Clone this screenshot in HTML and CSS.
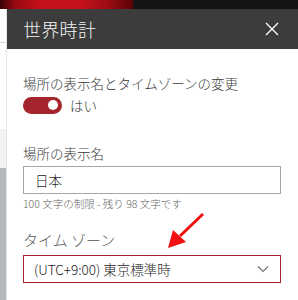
FILE: index.html
```html
<!DOCTYPE html>
<html lang="ja">
<head>
<meta charset="utf-8">
<link rel="stylesheet" href="styles.css">
</head>
<body>
<div class="topbar">
  <div class="banner"></div>
  <div class="dark"><span class="sun"></span></div>
</div>
<div class="main">
  <div class="side">
    <div class="s1"></div>
    <div class="s2"></div>
    <div class="s3"></div>
    <div class="s4"></div>
  </div>
  <div class="panel">
    <div class="header">
      <span class="title">世界時計</span>
      <svg class="close" width="14" height="14" viewBox="0 0 14 14"><path d="M1 1L13 13M13 1L1 13" stroke="#fff" stroke-width="1.3" fill="none"/></svg>
    </div>
    <div class="body">
      <div class="label">場所の表示名とタイムゾーンの変更</div>
      <div class="toggle-row">
        <span class="toggle"><span class="thumb"></span></span>
        <span class="toggle-text">はい</span>
      </div>
      <div class="label label2">場所の表示名</div>
      <div class="input">日本</div>
      <div class="help">100 文字の制限 - 残り 98 文字です</div>
      <div class="label label3">タイム ゾーン</div>
      <div class="select">
        <span>(UTC+9:00) 東京標準時</span>
        <svg class="chev" width="12" height="8" viewBox="0 0 12 8"><path d="M1 1.5L6 6.5L11 1.5" stroke="#777" stroke-width="1.2" fill="none"/></svg>
      </div>
    </div>
  </div>
</div>
<svg class="arrow" width="298" height="300" viewBox="0 0 298 300">
  <line x1="203" y1="214" x2="180" y2="236" stroke="#f01010" stroke-width="3"/>
  <polygon points="168,248 173,230 186,242" fill="#f01010"/>
</svg>
</body>
</html>
```
FILE: styles.css
```css
* { box-sizing: border-box; }
html, body { margin: 0; padding: 0; }
body {
  width: 298px;
  height: 300px;
  overflow: hidden;
  background: #fff;
  font-family: "Noto Sans CJK JP", "Noto Sans", sans-serif;
  font-weight: 300;
  position: relative;
}
.topbar { display: flex; height: 9px; }
.banner {
  width: 133px;
  background: linear-gradient(90deg, #3a0204 0%, #9a0a12 12%, #c4101a 30%, #c8121b 58%, #a00c14 80%, #5a0306 100%);
}
.dark { flex: 1; background: #141414; position: relative; overflow: hidden; }
.sun {
  position: absolute;
  left: 271px; top: -6px;
  width: 14px; height: 9px;
  border-radius: 50%;
  background: #e8d45a;
}
.main { display: flex; height: 291px; }
.side { width: 6px; display: flex; flex-direction: column; }
.s1 { height: 34px; background: #fff; border-bottom: 1px solid #d8d8d8; }
.s2 { height: 86px; background: #fff; }
.s3 { height: 39px; background: #f2f2f2; }
.s4 { flex: 1; background: #b3b8bd; }
.panel { flex: 1; background: #fff; border-left: 1px solid #e4e4e4; }
.header {
  height: 40px;
  background: #3c3c3c;
  display: flex;
  align-items: center;
  justify-content: space-between;
  padding: 0 19px 0 16px;
}
.title { color: #f4f4f4; font-size: 18px; line-height: 24px; letter-spacing: 0.3px; }
.close { display: block; }
.body { padding: 24px 16px 0 16px; }
.label { font-size: 13.5px; line-height: 20px; color: #3a3a3a; }
.toggle-row { display: flex; align-items: center; margin-top: 3px; height: 18px; }
.toggle {
  width: 39px; height: 17px;
  border-radius: 9px;
  background: #a4262c;
  position: relative;
}
.thumb {
  position: absolute;
  right: 4px; top: 3.5px;
  width: 10px; height: 10px;
  border-radius: 50%;
  background: #fff;
}
.toggle-text { margin-left: 8px; font-size: 13.5px; color: #3a3a3a; line-height: 18px; }
.label2 { margin-top: 29px; }
.input {
  margin-top: 3px;
  width: 258px;
  height: 28px;
  border: 1px solid #a6a6a6;
  padding: 0 11px;
  font-size: 13.5px;
  line-height: 26px;
  color: #222;
}
.help { font-size: 10.5px; color: #666; line-height: 15px; margin-top: 2px; }
.label3 { font-size: 15px; margin-top: 19px; color: #555; }
.select {
  margin-top: 5px;
  width: 258px;
  height: 28px;
  border: 1px solid #a4262c;
  padding: 0 10px 0 10px;
  display: flex;
  align-items: center;
  justify-content: space-between;
  font-size: 13.5px;
  color: #222;
}
.chev { display: block; margin-right: 1px; }
.arrow { position: absolute; left: 0; top: 0; pointer-events: none; }
```
